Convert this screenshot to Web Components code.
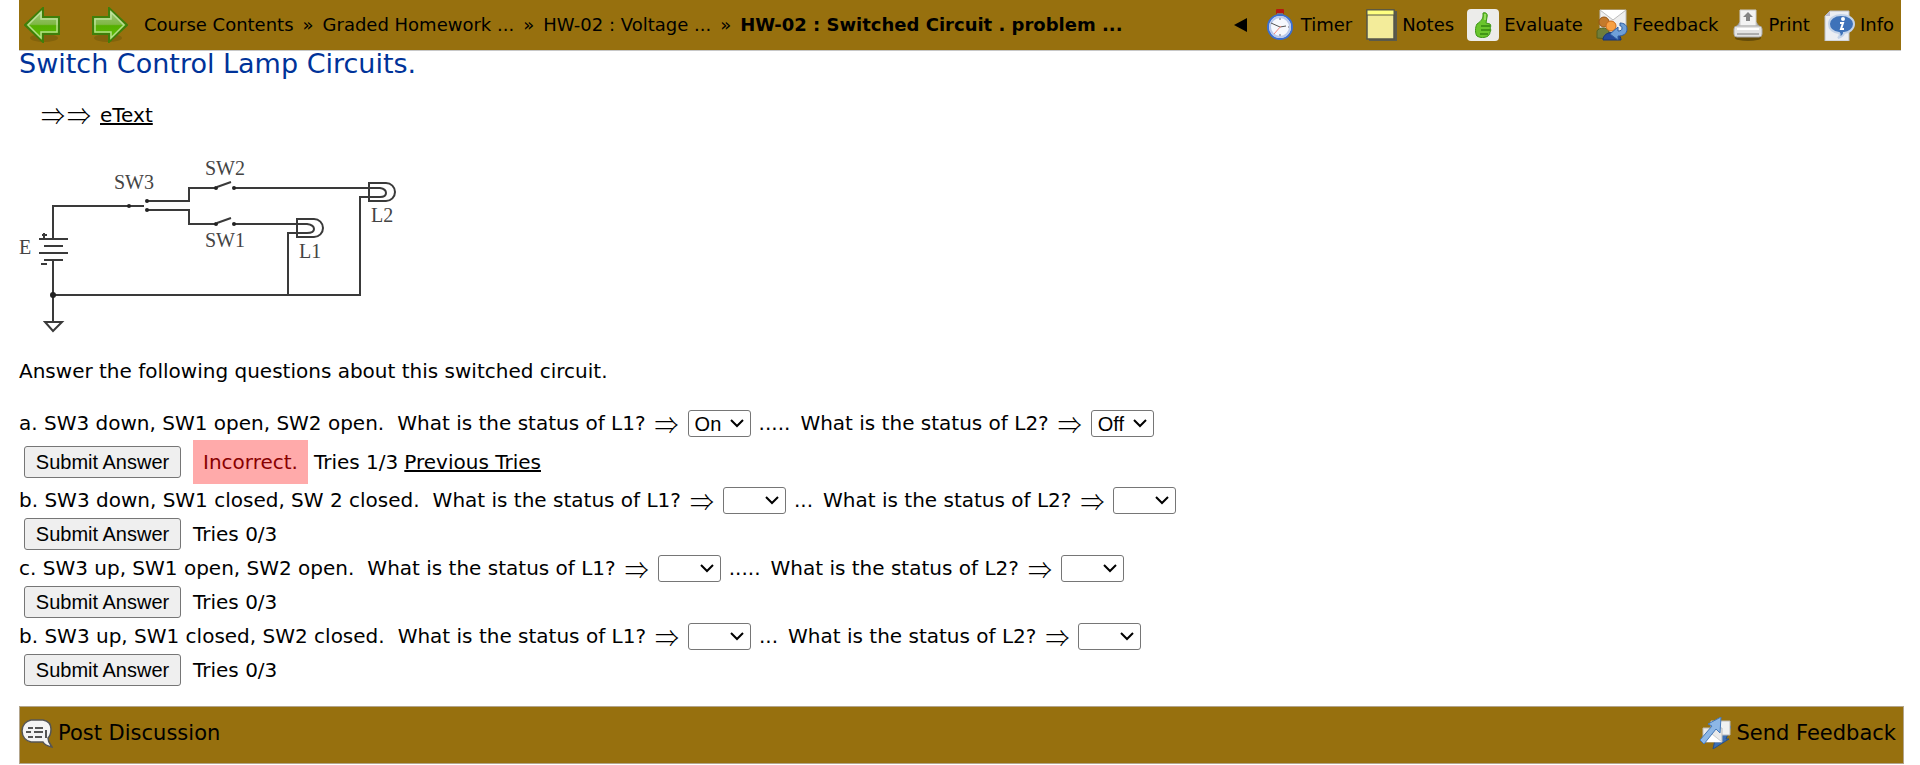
<!DOCTYPE html>
<html lang="en">
<head>
<meta charset="utf-8">
<title>HW-02 : Switched Circuit . problem</title>
<style>
  body {
    margin: 0;
    background: #fff;
    color: #000;
    font: 20px/24px "DejaVu Sans", sans-serif;
  }
  main {
    padding: 0 19px;
  }
  h1 {
    margin: 0 0 25px;
    color: #003399;
    font-size: 27px;
    font-weight: 400;
    line-height: 28px;
  }
  p {
    margin: 0;
  }
  a {
    color: #000;
  }
  .etext {
    display: flex;
    align-items: center;
    padding-left: 21px;
  }
  .etext a {
    margin-left: 8px;
  }
  circuit-diagram {
    margin: 22px 0 20px;
  }
  .questions {
    margin: 24px 0 18px;
  }
</style>
</head>
<body>
<course-bar>
  <tool-link slot="tools" icon="timer">Timer</tool-link>
  <tool-link slot="tools" icon="notes">Notes</tool-link>
  <tool-link slot="tools" icon="evaluate">Evaluate</tool-link>
  <tool-link slot="tools" icon="feedback">Feedback</tool-link>
  <tool-link slot="tools" icon="print">Print</tool-link>
  <tool-link slot="tools" icon="info">Info</tool-link>
</course-bar>
<main>
  <h1>Switch Control Lamp Circuits.</h1>
  <p class="etext"><implies-sign></implies-sign><implies-sign></implies-sign> <a href="#">eText</a></p>
  <circuit-diagram></circuit-diagram>
  <p>Answer the following questions about this switched circuit.</p>
  <div class="questions">
    <lamp-question text="a. SW3 down, SW1 open, SW2 open." dots="....." l1="On" l2="Off"></lamp-question>
    <submit-row result="Incorrect." tries="Tries 1/3"><a href="#">Previous Tries</a></submit-row>
    <lamp-question text="b. SW3 down, SW1 closed, SW 2 closed." dots="..."></lamp-question>
    <submit-row tries="Tries 0/3"></submit-row>
    <lamp-question text="c. SW3 up, SW1 open, SW2 open." dots="....."></lamp-question>
    <submit-row tries="Tries 0/3"></submit-row>
    <lamp-question text="b. SW3 up, SW1 closed, SW2 closed." dots="..."></lamp-question>
    <submit-row tries="Tries 0/3"></submit-row>
  </div>
</main>
<discussion-bar>
  <tool-link icon="discuss">Post Discussion</tool-link>
  <tool-link icon="send">Send Feedback</tool-link>
</discussion-bar>

<script>
const arrowShape = `
  <defs>
    <linearGradient id="g" x1="0" y1="0" x2="0" y2="1">
      <stop offset="0" stop-color="#a5cf83"/><stop offset=".48" stop-color="#7fb745"/>
      <stop offset=".52" stop-color="#55b000"/><stop offset="1" stop-color="#5fc00a"/>
    </linearGradient>
  </defs>
  <ellipse cx="20" cy="31" rx="14" ry="4" fill="#5b4a08" opacity=".35"/>
  <path d="M1 18 19 1v9h16v17H19v8z" fill="url(#g)" stroke="#3f7f0a" stroke-width="2"/>
  <path d="M4 18 17 5v7h16v13H17v6z" fill="none" stroke="#c9e8a8" stroke-width="1.500" opacity=".8"/>`;

const icons = {
  prev: `<svg viewBox="0 0 36 36">${arrowShape}</svg>`,
  next: `<svg viewBox="0 0 36 36"><g transform="translate(36 0) scale(-1 1)">${arrowShape}</g></svg>`,
  timer: `<svg viewBox="0 0 32 32">
    <rect x="12" y="0" width="8" height="5" rx="1" fill="#b51a12"/><rect x="13" y="4" width="6" height="2" fill="#777"/>
    <circle cx="16" cy="18" r="12" fill="#f6f8fd" stroke="#3b6fd0" stroke-width="2"/>
    <circle cx="16" cy="18" r="10" fill="none" stroke="#b9c9ea" stroke-width="2"/>
    <path d="M7 14l9 4 6-1" fill="none" stroke="#555"/><path d="M17 17l-7 8" stroke="#f08a80"/>
    <path d="M16 9v2M16 25v2M24 18h1" stroke="#667"/></svg>`,
  notes: `<svg viewBox="0 0 32 32"><path d="M4 2h28v30H4z" fill="#5a5a4c"/>
    <rect x="2" y="1" width="27" height="29" fill="#f3ec9a" stroke="#565648" stroke-width="1.500"/>
    <rect x="2" y="1" width="27" height="5" fill="#ffff80" stroke="#565648"/></svg>`,
  evaluate: `<svg viewBox="0 0 32 32"><rect width="32" height="32" rx="4" fill="#ececea"/>
    <path d="M16 4c3-1 5 1 4 4l-1 6 4 1c1 1 1 3 0 4 1 1 1 3 0 4 0 2-1 3-2 4-3 2-8 2-11 0-2-2-2-9 0-12 3-2 6-5 6-8z" fill="#6ac52c" stroke="#3c9416"/>
    <path d="M14 17h9M14 21h9M13 25h8" stroke="#35850f" stroke-width="1.300"/><path d="M18 5v6" stroke="#a7e66f" stroke-width="1.500"/></svg>`,
  feedback: `<svg viewBox="0 0 32 32"><path d="M4 1h26v22H4z" fill="#efefef" stroke="#bbb"/><path d="M4 1l13 10L30 1" fill="#fff" stroke="#bbb"/>
    <circle cx="8" cy="13" r="5" fill="#c37a2c" stroke="#965413"/><path d="M1 29V22c2-4 10-4 12 0v8z" fill="#6f7d3b" stroke="#52611f"/>
    <path d="M7 31c0-10 18-10 18 0z" fill="#254a9b" stroke="#173477"/><circle cx="15" cy="17" r="5" fill="#f7a043" stroke="#ca6a17"/>
    <path d="M14 25l8-7v4c3 0 4-1 4-3s-1-2-2-2v-3c4 0 7 2 7 6 0 5-4 7-9 7v4z" fill="#6f9fd8" stroke="#2f5d9f"/></svg>`,
  print: `<svg viewBox="0 0 32 32"><ellipse cx="16" cy="29" rx="13" ry="3" fill="#3b2d08" opacity=".55"/>
    <path d="M3 20l5-7h16l5 7z" fill="#bcbcbc" stroke="#999"/><path d="M8 1h16v16H8z" fill="#f3f3f3" stroke="#ccc"/>
    <path d="M16 3l5 5h-3v4h-4V8h-3z" fill="#858585"/><rect x="2" y="17" width="28" height="11" rx="3" fill="#e3e3e3" stroke="#aaa"/>
    <path d="M5 20h22" stroke="#fff" stroke-width="2"/><path d="M5 25h22" stroke="#777"/></svg>`,
  info: `<svg viewBox="0 0 32 32"><path d="M7 2h19v30H2V7z" fill="#eceef2" stroke="#b9bec8"/><path d="M2 7l5-5v5z" fill="#bbc"/>
    <path d="M18 6c8 0 13 4 13 9s-5 9-10 9c0 3-3 4-6 5 2-2 2-4 1-5-6-1-10-4-10-9 0-5 5-9 12-9z" fill="#3e72b9" stroke="#c3d3e9" stroke-width="2"/>
    <circle cx="20" cy="10" r="2" fill="#fff"/><path d="M17 14h3l-2 6h3" fill="none" stroke="#fff" stroke-width="2"/></svg>`,
  discuss: `<svg viewBox="0 0 32 32"><path d="M10 3h12c5 1 8 4 8 9 0 4-1 7-3 9 0 4 2 6 4 9-5-1-8-3-9-5H10c-5-1-9-5-9-11S5 4 10 3z" fill="#f4f4f4" stroke="#555" stroke-width="1.500"/>
    <path d="M7 11h5m2 0h8M5 15h5m3 0h9M7 20h5m2 0h7" stroke="#555" stroke-width="2"/><path d="M25 13v8" stroke="#555" stroke-width="2"/></svg>`,
  send: `<svg viewBox="0 0 32 32"><path d="M14 17l18-8-5 13h3L14 32l2-9z" fill="#3c6fb5" stroke="#27508a"/>
    <path d="M12 4h19v14H12z" fill="#f1f1f1" stroke="#bbb"/><path d="M4 11h19v14H4z" fill="#eaeaea" stroke="#bbb"/><path d="M4 25l9-8 10 8" fill="#fff" stroke="#ccc"/>
    <path d="M22 0l-1 16-4-4L5 27l-4-4L13 9 9 7z" fill="#8db7e6" stroke="#4478b8"/></svg>`
};

class CourseBar extends HTMLElement {
  constructor() {
    super();
    this.attachShadow({ mode: 'open' });
    this.shadowRoot.innerHTML = `
      <style>
        :host {
          display: flex;
          align-items: center;
          justify-content: space-between;
          min-height: 50px;
          margin: 0 19px;
          padding: 0 7px 0 5px;
          box-sizing: border-box;
          background: #97700e;
          box-shadow: 0 1px #c8c8c8;
          font-size: 18px;
        }
        a {
          color: #000;
          text-decoration: none;
        }
        nav, .tools {
          display: flex;
          align-items: center;
        }
        .arrow {
          width: 36px;
          height: 36px;
          margin-right: 32px;
        }
        .arrow + .arrow {
          margin-right: 16px;
        }
        .crumbs {
          display: flex;
          gap: 9px;
        }
        .tools {
          gap: 13px;
        }
        .fold {
          width: 13px;
          height: 14px;
          margin-right: 4px;
          padding: 0;
          border: 0;
          background: none;
        }
        svg {
          display: block;
        }
      </style>
      <nav>
        <a class="arrow" href="#" aria-label="Previous">${icons.prev}</a>
        <a class="arrow" href="#" aria-label="Next">${icons.next}</a>
        <div class="crumbs">
          <a href="#">Course Contents</a><span>»</span>
          <a href="#">Graded Homework ...</a><span>»</span>
          <a href="#">HW-02 : Voltage ...</a><span>»</span>
          <b>HW-02 : Switched Circuit . problem ...</b>
        </div>
      </nav>
      <div class="tools">
        <button class="fold" aria-label="Collapse tools"><svg viewBox="0 0 13 14"><path d="M0 7 13 0v14z"/></svg></button>
        <slot name="tools"></slot>
      </div>
    `;
  }
}
customElements.define('course-bar', CourseBar);

class ToolLink extends HTMLElement {
  connectedCallback() {
    this.attachShadow({ mode: 'open' });
    this.shadowRoot.innerHTML = `
      <style>
        :host {
          display: block;
        }
        a {
          display: flex;
          align-items: center;
          gap: 5px;
          color: #000;
          text-decoration: none;
        }
        svg {
          display: block;
          width: 32px;
          height: 32px;
        }
      </style>
      <a href="#">${icons[this.getAttribute('icon')]}<slot></slot></a>
    `;
  }
}
customElements.define('tool-link', ToolLink);

class ImpliesSign extends HTMLElement {
  constructor() {
    super();
    this.attachShadow({ mode: 'open' });
    this.shadowRoot.innerHTML = `
      <style>
        :host {
          display: inline-block;
          width: 26px;
          text-align: center;
          font-family: "Noto Sans CJK JP", sans-serif;
          font-size: 24px;
          font-weight: 300;
          line-height: 24px;
        }
      </style>
      <span>⇒</span>
    `;
  }
}
customElements.define('implies-sign', ImpliesSign);

class CircuitDiagram extends HTMLElement {
  constructor() {
    super();
    this.attachShadow({ mode: 'open' });
    this.shadowRoot.innerHTML = `
      <style>
        :host {
          display: block;
        }
        svg {
          display: block;
          width: 400px;
          height: 190px;
        }
        .wire {
          fill: none;
          stroke: #3a3a3a;
          stroke-width: 2;
        }
        .dot {
          fill: #222;
        }
        text {
          fill: #444;
          font: 20px "Liberation Serif", serif;
        }
      </style>
      <svg viewBox="19 150 400 190" role="img" aria-label="Switched lamp circuit">
        <path class="wire" d="M53 240V207H144M147 202H189V189H216M147 211H189V225H216M217 188l14-5M217 224l14-5M234 189H380q6 1 6 5t-6 4H360V296H53M234 225H307q7 1 7 5t-7 4H288V296"/>
        <path class="wire" d="M369 184h17a9 9 0 0 1 0 18h-17zM297 220h17a9 9 0 0 1 0 18h-17z"/>
        <path class="wire" d="M39 240H68M44 247H63M39 254H68M44 261H63M53 261V323M45 323H62L53 332zM42 236h5M44 234v5M41 265h6"/>
        <g class="dot">
          <circle cx="129" cy="207" r="2"/><circle cx="147" cy="202" r="2"/><circle cx="147" cy="211" r="2"/>
          <circle cx="216" cy="189" r="2"/><circle cx="234" cy="189" r="2"/>
          <circle cx="216" cy="225" r="2"/><circle cx="234" cy="225" r="2"/>
          <circle cx="53" cy="296" r="3"/>
        </g>
        <text x="114" y="190">SW3</text>
        <text x="205" y="176">SW2</text>
        <text x="205" y="248">SW1</text>
        <text x="19" y="255">E</text>
        <text x="299" y="259">L1</text>
        <text x="371" y="223">L2</text>
      </svg>
    `;
  }
}
customElements.define('circuit-diagram', CircuitDiagram);

class LampQuestion extends HTMLElement {
  connectedCallback() {
    this.attachShadow({ mode: 'open' });
    this.shadowRoot.innerHTML = `
      <style>
        :host {
          display: flex;
          flex-wrap: wrap;
          align-items: center;
          gap: 0 8px;
          line-height: 33px;
        }
        .setup {
          margin-right: 5px;
        }
        .dots {
          margin-right: 2px;
        }
        label {
          display: flex;
          align-items: center;
          gap: 8px;
        }
        .pick {
          display: grid;
          align-items: center;
        }
        .pick > * {
          grid-area: 1 / 1;
        }
        select {
          appearance: none;
          width: 63px;
          height: 27px;
          padding: 0 6px;
          border: 1px solid #767676;
          border-radius: 3px;
          background: #fff;
          color: #000;
          font: 20px "Liberation Sans", sans-serif;
        }
        svg {
          justify-self: end;
          width: 14px;
          height: 9px;
          margin-right: 7px;
          fill: none;
          stroke: #000;
          stroke-width: 2;
          pointer-events: none;
        }
      </style>
      <span class="setup">${this.getAttribute('text')}</span>
      <label>What is the status of L1? <implies-sign></implies-sign> ${this.lampSelect('l1')}</label>
      <span class="dots">${this.getAttribute('dots')}</span>
      <label>What is the status of L2? <implies-sign></implies-sign> ${this.lampSelect('l2')}</label>
    `;
  }

  lampSelect(lamp) {
    const picked = this.getAttribute(lamp) || '';
    const options = ['', 'On', 'Off'].map(o => `<option${o === picked ? ' selected' : ''}>${o}</option>`);
    return `<span class="pick"><select name="${lamp}">${options.join('')}</select><svg viewBox="0 0 14 9"><path d="M1 1l6 6 6-6"/></svg></span>`;
  }
}
customElements.define('lamp-question', LampQuestion);

class SubmitRow extends HTMLElement {
  connectedCallback() {
    const result = this.getAttribute('result');
    this.attachShadow({ mode: 'open' });
    this.shadowRoot.innerHTML = `
      <style>
        :host {
          display: flex;
          align-items: center;
          gap: 6px;
          padding: 1px 0 2px 5px;
        }
        :host([result]) {
          padding-top: 0;
          padding-bottom: 0;
        }
        button {
          width: 157px;
          height: 32px;
          margin-right: 6px;
          padding: 0;
          border: 1px solid #767676;
          border-radius: 3px;
          background: #efefef;
          color: #000;
          font: 20px "Liberation Sans", sans-serif;
        }
        .result {
          padding: 10px;
          background: #ffaaaa;
          color: #880000;
        }
      </style>
      <button>Submit Answer</button>
      ${result ? `<span class="result">${result}</span>` : ''}
      <span>${this.getAttribute('tries')}</span>
      <slot></slot>
    `;
  }
}
customElements.define('submit-row', SubmitRow);

class DiscussionBar extends HTMLElement {
  constructor() {
    super();
    this.attachShadow({ mode: 'open' });
    this.shadowRoot.innerHTML = `
      <style>
        :host {
          display: flex;
          justify-content: space-between;
          margin: 0 16px 0 19px;
          padding: 10px 7px 14px 1px;
          border: 1px solid #b3a58c;
          background: #97700e;
          font-size: 21px;
        }
      </style>
      <slot></slot>
    `;
  }
}
customElements.define('discussion-bar', DiscussionBar);
</script>
</body>
</html>
